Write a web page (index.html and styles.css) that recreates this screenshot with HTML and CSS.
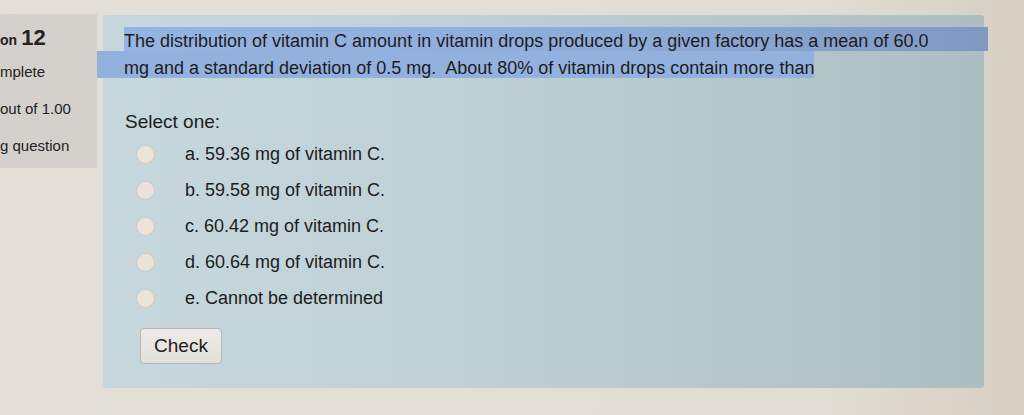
FILE: index.html
```html
<!DOCTYPE html>
<html>
<head>
<meta charset="utf-8">
<link rel="stylesheet" href="styles.css">
</head>
<body>
<div class="page">
  <aside class="info">
    <div class="qno"><span class="qword">on</span> <span class="qnum">12</span></div>
    <div class="state">mplete</div>
    <div class="grade">out of 1.00</div>
    <div class="flag">g question</div>
  </aside>
  <main class="formulation">
    <p class="qtext"><span class="l1">The distribution of vitamin C amount in vitamin drops produced by a given factory has a mean of 60.0</span><span class="l2">mg and a standard deviation of 0.5 mg.&nbsp; About 80% of vitamin drops contain more than</span></p>
    <div class="prompt">Select one:</div>
    <div class="answer">
      <label class="opt"><span class="radio"></span><span class="lbl">a. 59.36 mg of vitamin C.</span></label>
      <label class="opt"><span class="radio"></span><span class="lbl">b. 59.58 mg of vitamin C.</span></label>
      <label class="opt"><span class="radio"></span><span class="lbl">c. 60.42 mg of vitamin C.</span></label>
      <label class="opt"><span class="radio"></span><span class="lbl">d. 60.64 mg of vitamin C.</span></label>
      <label class="opt"><span class="radio"></span><span class="lbl">e. Cannot be determined</span></label>
    </div>
    <button class="check">Check</button>
  </main>
</div>
</body>
</html>
```
FILE: styles.css
```css
html, body {
  margin: 0;
  padding: 0;
}
body {
  width: 1024px;
  height: 415px;
  overflow: hidden;
  background: linear-gradient(90deg, #e3dfd7 0%, #e2ddd4 80%, #d6cfc3 100%);
  font-family: "Liberation Sans", Arial, sans-serif;
  color: #1c1c1c;
}
.page {
  display: flex;
  align-items: flex-start;
}
.info {
  width: 97px;
  height: 154px;
  margin-top: 14px;
  background: #d4d1cc;
  font-size: 15px;
  color: #222;
  box-sizing: border-box;
  padding-top: 13px;
}
.qno {
  height: 35px;
  line-height: 22px;
  font-weight: bold;
}
.qword { font-size: 14px; }
.qnum { font-size: 22px; }
.state, .grade, .flag {
  height: 37px;
  line-height: 20px;
}
.formulation {
  width: 881px;
  height: 373px;
  margin-top: 15px;
  margin-left: 6px;
  background: linear-gradient(90deg, #c6d7dd 0%, #bfd0d6 40%, #adbec3 100%);
  border-radius: 3px;
  box-sizing: border-box;
  padding-top: 12px;
}
.qtext {
  margin: 0 -4px 0 -6px;
  font-size: 18px;
}
.l1 {
  display: block;
  margin-left: 27px;
  background: linear-gradient(90deg, #96b4e2 0%, #8eaad8 60%, #8199c2 100%);
  height: 24px;
  line-height: 28px;
}
.l2 {
  display: block;
  width: fit-content;
  padding-left: 27px;
  background: #93b1df;
  height: 27px;
  line-height: 34px;
}
.prompt {
  margin-top: 31px;
  margin-left: 22px;
  font-size: 19px;
  line-height: 26px;
}
.answer {
  margin-top: 1px;
}
.opt {
  display: flex;
  align-items: center;
  height: 36px;
  font-size: 18px;
}
.radio {
  width: 17px;
  height: 17px;
  border-radius: 50%;
  background: #ebe2d8;
  box-shadow: 0 0 0 1px #cfcbc6;
  margin-left: 34px;
  flex: none;
}
.lbl {
  margin-left: 31px;
}
.check {
  display: block;
  margin-top: 12px;
  margin-left: 37px;
  width: 82px;
  height: 36px;
  background: linear-gradient(#eeebe6, #e3e0db);
  border: 1px solid #b4b6b6;
  border-radius: 4px;
  font-family: "Liberation Sans", Arial, sans-serif;
  font-size: 19px;
  color: #1c1c1c;
  padding: 0;
}
```
